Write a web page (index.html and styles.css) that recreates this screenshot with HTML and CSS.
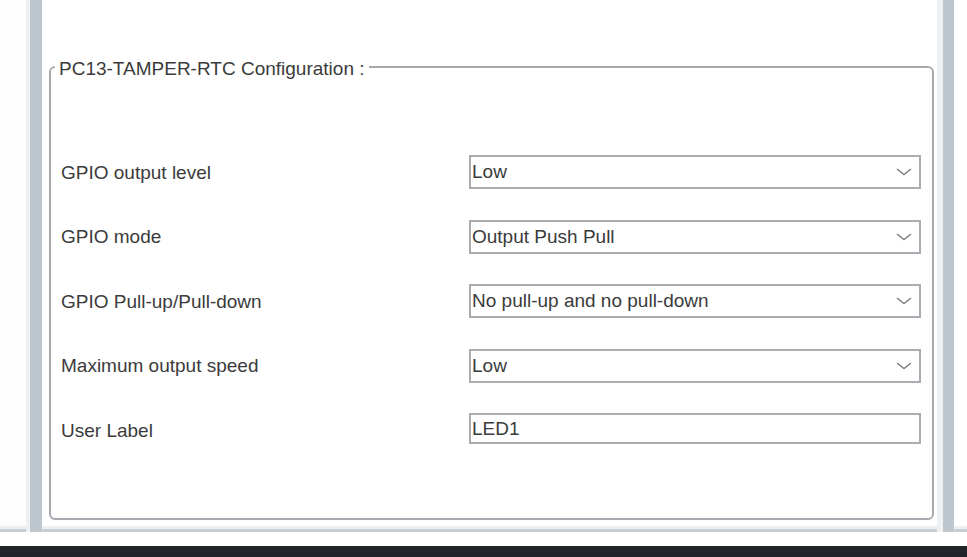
FILE: index.html
```html
<!DOCTYPE html>
<html lang="en">
<head>
<meta charset="utf-8">
<title>PC13-TAMPER-RTC Configuration</title>
<link rel="stylesheet" href="styles.css">
</head>
<body>
<div class="workspace">
  <div class="pane pane-left"></div>
  <div class="gutter gutter-left"></div>
  <div class="splitter splitter-left"></div>
  <div class="pane content">
    <fieldset class="config">
      <legend class="config-title">PC13-TAMPER-RTC Configuration :</legend>
      <div class="rows">
        <div class="label">GPIO output level</div>
        <div class="select"><span>Low</span><svg class="chev" width="16" height="8" viewBox="0 0 16 8"><path d="M1 1 L8 6.5 L15 1" fill="none" stroke="#808080" stroke-width="1.5"/></svg></div>

        <div class="label">GPIO mode</div>
        <div class="select"><span>Output Push Pull</span><svg class="chev" width="16" height="8" viewBox="0 0 16 8"><path d="M1 1 L8 6.5 L15 1" fill="none" stroke="#808080" stroke-width="1.5"/></svg></div>

        <div class="label">GPIO Pull-up/Pull-down</div>
        <div class="select"><span>No pull-up and no pull-down</span><svg class="chev" width="16" height="8" viewBox="0 0 16 8"><path d="M1 1 L8 6.5 L15 1" fill="none" stroke="#808080" stroke-width="1.5"/></svg></div>

        <div class="label">Maximum output speed</div>
        <div class="select"><span>Low</span><svg class="chev" width="16" height="8" viewBox="0 0 16 8"><path d="M1 1 L8 6.5 L15 1" fill="none" stroke="#808080" stroke-width="1.5"/></svg></div>

        <div class="label">User Label</div>
        <div class="textbox">LED1</div>
      </div>
    </fieldset>
  </div>
  <div class="gutter gutter-right"></div>
  <div class="splitter splitter-right"></div>
  <div class="pane pane-right"></div>
</div>
<div class="spacer"></div>
<div class="statusbar"></div>
</body>
</html>
```

FILE: styles.css
```css
html, body {
  margin: 0;
  padding: 0;
}

body {
  width: 967px;
  height: 557px;
  overflow: hidden;
  background: #ffffff;
  font-family: "Liberation Sans", Arial, sans-serif;
  color: #3b3b3b;
  display: flex;
  flex-direction: column;
}

.workspace {
  display: flex;
  height: 532px;
  flex: none;
}

.pane {
  box-sizing: border-box;
  background: #ffffff;
  border-bottom: 3px solid #c8cfd4;
  box-shadow: inset 0 -3px 0 #eceff1;
}

.pane-left {
  width: 26px;
  background: #fdfdfd;
}

.pane-right {
  width: 13px;
}

.gutter {
  background: #eef0f2;
}

.gutter-left {
  width: 4px;
}

.gutter-right {
  width: 6px;
}

.splitter {
  background: #bdc7cd;
}

.splitter-left {
  width: 12px;
}

.splitter-right {
  width: 11px;
}

.content {
  flex: 1;
  min-width: 0;
  display: flex;
  flex-direction: column;
}

.config {
  flex: 1;
  min-width: 0;
  margin: 54px 3px 9px 7px;
  padding: 0;
  border: 2px solid #a6aaae;
  border-radius: 6px;
}

.config-title {
  margin-left: 4px;
  padding: 4px 4px 0;
  font-size: 19px;
  line-height: 22px;
  color: #3b3b3b;
}

.rows {
  display: grid;
  grid-template-columns: 408px 1fr;
  grid-auto-rows: 34px;
  row-gap: 30.5px;
  align-items: center;
  padding: 75px 11px 0 10px;
}

.label {
  font-size: 19px;
  line-height: 22px;
  color: #3b3b3b;
  padding-top: 1px;
}

.select,
.textbox {
  box-sizing: border-box;
  display: flex;
  align-items: center;
  border: 2px solid #a9adb1;
  background: #ffffff;
  font-size: 19px;
  line-height: 22px;
  color: #3b3b3b;
  padding: 0 7px 0 1px;
}

.select {
  height: 34px;
  justify-content: space-between;
}

.textbox {
  height: 31px;
  align-self: start;
}

.chev {
  display: block;
  flex: none;
}

.spacer {
  height: 14px;
  flex: none;
}

.statusbar {
  height: 11px;
  flex: none;
  background: #212529;
}
```
